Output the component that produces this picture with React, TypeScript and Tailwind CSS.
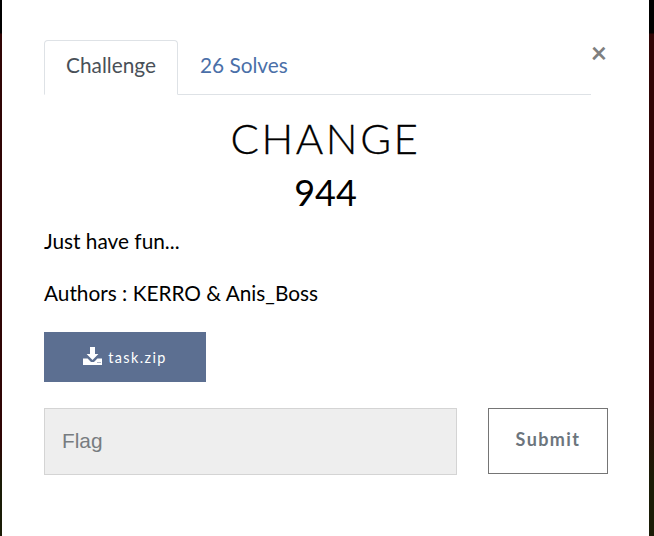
import React from "react";

function DownloadIcon() {
  return (
    <svg width="19" height="18" viewBox="0 0 19 18" className="shrink-0 -translate-y-px" aria-hidden="true">
      <path fill="#fff" d="M7 0h5v7h3.400L9.500 13 3.600 7H7z" />
      <path fill="#fff" fillRule="evenodd" d="M0 11.500h4.600L8 15h3l3.400-3.500H19V18H0zM14.500 15h1v1h-1zM16.500 15h1v1h-1z" />
    </svg>
  );
}

export default function App() {
  return (
    <div className="flex h-[536px] w-[654px] overflow-hidden bg-white font-['Lato','Liberation_Sans',sans-serif] text-black">
      <div className="w-[2px] shrink-0 bg-[linear-gradient(to_bottom,#000_0,#000_33px,#300505_34px,#300505_82%,#1a1c06_90%,#1a1c06_100%)]" />
      <main className="flex w-[647px] shrink-0 flex-col pl-[42px] pr-[41px] pt-[40px]">
        <div className="relative">
          <div className="flex h-[55px] w-[547px] border-b border-[#dee2e6]">
            <div className="h-[55px] w-[134px] rounded-t-[4px] border border-b-white border-[#dee2e6] bg-white pt-[10px] text-center text-[20.8px] leading-[28px] text-[#495057]">
              Challenge
            </div>
            <div className="pl-[22px] pt-[11px] text-[20.8px] leading-[28px] text-[#4a6fa8]">26 Solves</div>
          </div>
          <span className="absolute right-[1px] top-[-5px] text-[28px] font-bold leading-[34px] text-[#7f7f7f]">×</span>
        </div>
        <h1 className="mt-[11px] w-[563px] text-center text-[42px] font-light leading-[65px] tracking-[2.6px] [-webkit-text-stroke:0.3px_#000]">CHANGE</h1>
        <div className="w-[563px] text-center text-[36px] leading-[43px]">944</div>
        <p className="mt-[13px] text-[20.8px] leading-[28px]">Just have fun...</p>
        <p className="mt-[24px] text-[20.8px] leading-[28px]">Authors : KERRO &amp; Anis_Boss</p>
        <button className="mt-[25px] flex h-[50px] w-[162px] items-center justify-center gap-[6px] bg-[#5c6f91] text-[14.4px] tracking-[1.4px] text-white">
          <DownloadIcon />
          <span className="pt-[2px]">task.zip</span>
        </button>
        <div className="mt-[26px] flex w-[564px] items-start justify-between">
          <div className="flex h-[67px] w-[413px] items-center border border-[#d4d4d4] bg-[#eeeeee] pb-[1px] pl-[17px] font-['Liberation_Sans',sans-serif] text-[20.8px] text-[#777c80]">
            Flag
          </div>
          <button className="h-[66px] w-[120px] border border-[#757575] bg-white pb-[4px] text-[18px] font-bold tracking-[1.4px] text-[#6c757d]">
            Submit
          </button>
        </div>
      </main>
      <div className="w-[5px] shrink-0 bg-[linear-gradient(to_bottom,#000_0,#000_33px,#300505_34px,#300505_74%,#1a1c06_90%,#1a1c06_100%)]" />
    </div>
  );
}
